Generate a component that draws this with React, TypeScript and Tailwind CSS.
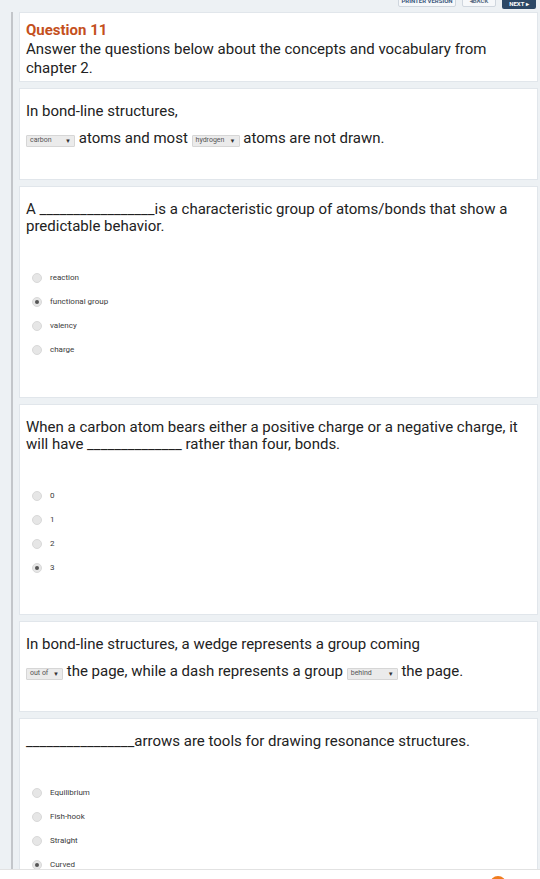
import React from "react";

type Option = { label: string; selected?: boolean };

function Select({ value, className }: { value: string; className: string }) {
  return (
    <span
      className={`inline-flex h-[12px] items-center justify-between rounded-[1px] border border-[#d6d6d6] bg-[#ebebeb] px-[3px] align-[1px] text-[7px] leading-none text-[#555] ${className}`}
    >
      <span>{value}</span>
      <span className="text-[6px] text-[#333]">▼</span>
    </span>
  );
}

function Radio({ label, selected }: Option) {
  return (
    <div className="flex h-[24px] items-center">
      <span className="ml-[6px] flex h-[10px] w-[10px] items-center justify-center rounded-full border border-[#d9d9d9] bg-[#e6e6e6]">
        {selected && <span className="h-[4px] w-[4px] rounded-full bg-[#555]" />}
      </span>
      <span className="ml-[8px] text-[8px] text-[#3a3a3a]">{label}</span>
    </div>
  );
}

function Card({ className, children }: { className: string; children: React.ReactNode }) {
  return (
    <div className={`border border-[#e1e6eb] bg-white pl-[6px] pr-[10px] ${className}`}>
      {children}
    </div>
  );
}

export default function App() {
  const q2: Option[] = [
    { label: "reaction" },
    { label: "functional group", selected: true },
    { label: "valency" },
    { label: "charge" },
  ];
  const q3: Option[] = [
    { label: "0" },
    { label: "1" },
    { label: "2" },
    { label: "3", selected: true },
  ];
  const q5: Option[] = [
    { label: "Equilibrium" },
    { label: "Fish-hook" },
    { label: "Straight" },
    { label: "Curved", selected: true },
  ];

  return (
    <div className="relative h-[879px] w-[540px] overflow-hidden bg-[#edf1f4] font-['Roboto',sans-serif] text-[#222]">
      {/* top actions, clipped by the window */}
      <div className="flex h-[12px] items-end justify-end gap-[6px] overflow-hidden pr-[4px]">
        <button className="mb-[5px] flex h-[16px] w-[58px] items-end justify-center rounded-[2px] border border-[#cfd6de] bg-[#f6f8fa] pb-[2px] text-[6px] font-bold leading-none text-[#3c5a7e]">
          PRINTER VERSION
        </button>
        <button className="mb-[5px] flex h-[16px] w-[34px] items-end justify-center rounded-[2px] border border-[#cfd6de] bg-[#f6f8fa] pb-[2px] text-[6px] font-bold leading-none text-[#5a6f86]">
          ◂BACK
        </button>
        <button className="mb-[3px] flex h-[16px] w-[34px] items-end justify-center rounded-[2px] bg-[#2c4866] pb-[2px] text-[6px] font-bold leading-none text-white">
          NEXT ▸
        </button>
      </div>

      <div className="flex pl-[11px] pr-[2px]">
        <div className="w-[2px] self-stretch bg-[#c3c6ca]" />
        <div className="ml-[6px] flex flex-1 flex-col gap-[6px]">
          <Card className="pb-[3px] pt-[8px]">
            <div className="text-[15px] font-bold leading-[19px] text-[#c4501d]">Question 11</div>
            <p className="text-[15px] leading-[19px]">
              Answer the questions below about the concepts and vocabulary from chapter 2.
            </p>
          </Card>

          <Card className="pb-[32px] pt-[14px]">
            <p className="text-[15px] leading-[17px]">In bond-line structures,</p>
            <p className="mt-[10px] text-[15px] leading-[17px]">
              <Select value="carbon" className="w-[49px]" /> atoms and most{" "}
              <Select value="hydrogen" className="w-[48px]" /> atoms are not drawn.
            </p>
          </Card>

          <Card className="pb-[35px] pt-[14px]">
            <p className="text-[15px] leading-[17px]">
              A _________________is a characteristic group of atoms/bonds that show a predictable behavior.
            </p>
            <div className="mt-[31px]">
              {q2.map((o) => (
                <Radio key={o.label} {...o} />
              ))}
            </div>
          </Card>

          <Card className="pb-[34px] pt-[14px]">
            <p className="text-[15px] leading-[17px]">
              When a carbon atom bears either a positive charge or a negative charge, it will have ______________ rather than four, bonds.
            </p>
            <div className="mt-[31px]">
              {q3.map((o) => (
                <Radio key={o.label} {...o} />
              ))}
            </div>
          </Card>

          <Card className="pb-[31px] pt-[14px]">
            <p className="text-[15px] leading-[17px]">
              In bond-line structures, a wedge represents a group coming
            </p>
            <p className="mt-[10px] text-[15px] leading-[17px]">
              <Select value="out of" className="w-[37px]" /> the page, while a dash represents a group{" "}
              <Select value="behind" className="w-[51px]" /> the page.
            </p>
          </Card>

          <Card className="pb-[34px] pt-[14px]">
            <p className="text-[15px] leading-[17px]">
              ________________arrows are tools for drawing resonance structures.
            </p>
            <div className="mt-[31px]">
              {q5.map((o) => (
                <Radio key={o.label} {...o} />
              ))}
            </div>
          </Card>
        </div>
      </div>

      {/* bottom toolbar overlay */}
      <div className="absolute bottom-0 left-0 right-0 h-[10px] border-t border-[#e2e2e2] bg-white">
        <div className="absolute left-[490px] top-[6px] h-[16px] w-[16px] rounded-full bg-[#f07c1e]" />
      </div>
    </div>
  );
}
